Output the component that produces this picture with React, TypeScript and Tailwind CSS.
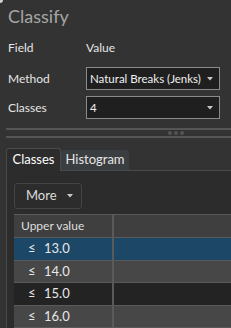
const rows = [
  { value: "13.0", bg: "bg-[#1c4767]" },
  { value: "14.0", bg: "bg-[#474747]" },
  { value: "15.0", bg: "bg-[#232323]" },
  { value: "16.0", bg: "bg-[#474747]" },
];

// small filled caret used by the combo boxes
const Caret = () => (
  <svg width="6" height="4" viewBox="0 0 6 4" className="shrink-0">
    <path d="M0 0 H6 L3 3.5 Z" fill="#c8c8c8" />
  </svg>
);

const Select = ({ value }: { value: string }) => (
  <div className="flex h-[23px] w-[134px] items-center justify-between border border-[#8a8a8a] bg-[#1f1f1f] pl-[3px] pr-[6px] text-[11.5px] text-[#f0f0f0]">
    <span>{value}</span>
    <Caret />
  </div>
);

const App = () => {
  return (
    <div
      className="relative h-[328px] w-[231px] overflow-hidden bg-[#333333] text-[12px] text-[#e6e6e6]"
      style={{ fontFamily: "Lato, 'Liberation Sans', sans-serif" }}
    >
      {/* window corner */}
      <div className="absolute left-0 top-0 h-[3px] w-[3px] rounded-br-[3px] bg-[#d0d0d0]" />

      <h1 className="pl-[8px] pt-[4px] text-[18px] leading-[24px] text-[#a6a6a6]">Classify</h1>

      {/* parameters */}
      <div className="mt-[10px] flex flex-col pl-[8px]">
        <div className="flex h-[20px] items-center">
          <span className="w-[78px]">Field</span>
          <span>Value</span>
        </div>
        <div className="mt-[9px] flex items-center">
          <span className="w-[78px]">Method</span>
          <Select value="Natural Breaks (Jenks)" />
        </div>
        <div className="mt-[6px] flex items-center">
          <span className="w-[78px]">Classes</span>
          <Select value="4" />
        </div>
      </div>

      {/* splitter */}
      <div className="ml-[6px] mt-[9px] flex flex-col">
        <div className="h-[2px] bg-[#555555]" />
        <div className="flex h-[6px] items-center gap-[2px] pl-[162px]">
          <span className="h-[4px] w-[4px] rounded-full bg-[#555555]" />
          <span className="h-[4px] w-[4px] rounded-full bg-[#555555]" />
          <span className="h-[4px] w-[4px] rounded-full bg-[#555555]" />
        </div>
        <div className="h-[2px] bg-[#555555]" />
      </div>

      {/* tabs */}
      <div className="ml-[6px] mt-[10px] flex items-end">
        <div className="flex h-[23px] w-[55px] items-center justify-center rounded-t-[3px] border border-b-0 border-[#4a4a4a] bg-[#2c2c2c] text-[13px] text-white">
          Classes
        </div>
        <div className="flex h-[21px] w-[68px] items-center justify-center rounded-t-[3px] border-b border-[#4a4a4a] bg-[#3b3e41] text-[13px] text-[#e6e6e6]">
          Histogram
        </div>
        <div className="flex-1 border-b border-[#4a4a4a]" />
      </div>

      {/* tab body */}
      <div className="ml-[6px] h-[200px] border-l border-[#4a4a4a] bg-[#2c2c2c] pl-[7px] pt-[12px]">
        <div className="flex h-[26px] w-[68px] items-center justify-between rounded-[3px] border border-[#444444] pl-[11px] pr-[8px] text-[13px] text-[#dcdcdc]">
          <span>More</span>
          <Caret />
        </div>

        <div className="mt-[5px] w-[240px] border-t border-[#5a5a5a]">
          <div className="flex h-[22px] bg-[#3f3f3f]">
            <div className="flex w-[100px] items-center border-r-[2px] border-[#5a5a5a] pl-[7px] text-[#dedede]">
              Upper value
            </div>
            <div className="flex-1" />
          </div>
          {rows.map((r) => (
            <div key={r.value} className={`flex h-[22.5px] border-t-[1.5px] border-[#5a5a5a] ${r.bg}`}>
              <div className="flex w-[100px] items-center border-r-[2px] border-[#5a5a5a] pl-[14px] text-[13px] text-[#e8e8e8]">
                <span className="w-[16px]">≤</span>
                <span>{r.value}</span>
              </div>
              <div className="flex-1" />
            </div>
          ))}
          <div className="border-t-[1.5px] border-[#5a5a5a]" />
        </div>
      </div>
    </div>
  );
};

export default App;
